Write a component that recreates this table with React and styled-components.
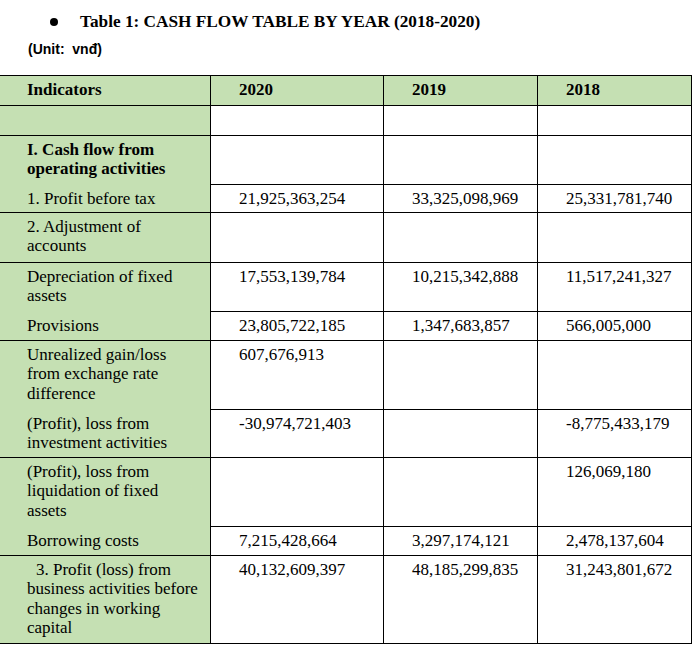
import styled, { createGlobalStyle } from 'styled-components';

const GlobalStyle = createGlobalStyle`
    html, body {
        margin: 0;
        padding: 0;
        background: #fff;
    }
    body {
        font-family: "Liberation Serif", "Times New Roman", serif;
        color: #000;
    }
`;

const Page = styled.div`
    width: 700px;
    padding-top: 12px;
`;

const TitleLine = styled.div`
    display: flex;
    align-items: center;
    height: 20px;
    padding-left: 50px;
    font-size: 17.25px;
    line-height: 20px;
    font-weight: bold;
`;

const Bullet = styled.span`
    width: 8px;
    height: 8px;
    margin-right: 22px;
    border-radius: 50%;
    background: #000;
`;

const Unit = styled.div`
    margin-top: 9px;
    padding-left: 28px;
    font-family: "Liberation Sans", Arial, sans-serif;
    font-size: 14px;
    line-height: 16px;
    font-weight: bold;
    white-space: pre;
`;

const Table = styled.div`
    width: 692px;
    margin-top: 18px;
    border-top: 1px solid #000;
`;

const Row = styled.div`
    display: grid;
    grid-template-columns: 211px 173px 154px 154px;
    height: ${(p) => p.$h}px;
`;

const Cell = styled.div`
    box-sizing: border-box;
    padding: 4px 8px 0 28px;
    border-right: 1px solid #000;
    border-bottom: ${(p) => (p.$open ? 'none' : '1px solid #000')};
    background: ${(p) => (p.$green ? '#c5e0b3' : '#fff')};
    font-size: 17px;
    line-height: 19.3px;
    font-weight: ${(p) => (p.$bold ? 'bold' : 'normal')};
    white-space: nowrap;
`;

const Label = styled(Cell)`
    padding-left: 27px;
    text-indent: ${(p) => (p.$indent ? '9px' : '0')};
`;

const rows = [
    { h: 30, lines: [''], vals: ['', '', ''] },
    { h: 49, lines: ['I. Cash flow from', 'operating activities'], bold: true, open: true, vals: ['', '', ''] },
    { h: 28, lines: ['1. Profit before tax'], vals: ['21,925,363,254', '33,325,098,969', '25,331,781,740'] },
    { h: 50, lines: ['2. Adjustment of', 'accounts'], vals: ['', '', ''] },
    { h: 49, lines: ['Depreciation of fixed', 'assets'], open: true, vals: ['17,553,139,784', '10,215,342,888', '11,517,241,327'] },
    { h: 29, lines: ['Provisions'], vals: ['23,805,722,185', '1,347,683,857', '566,005,000'] },
    { h: 69, lines: ['Unrealized gain/loss', 'from exchange rate', 'difference'], open: true, vals: ['607,676,913', '', ''] },
    { h: 48, lines: ['(Profit), loss from', 'investment activities'], vals: ['-30,974,721,403', '', '-8,775,433,179'] },
    { h: 69, lines: ['(Profit), loss from', 'liquidation of fixed', 'assets'], open: true, vals: ['', '', '126,069,180'] },
    { h: 29, lines: ['Borrowing costs'], vals: ['7,215,428,664', '3,297,174,121', '2,478,137,604'] },
    {
        h: 88,
        lines: ['3. Profit (loss) from', 'business activities before', 'changes in working', 'capital'],
        indent: true,
        vals: ['40,132,609,397', '48,185,299,835', '31,243,801,672'],
    },
];

const years = ['2020', '2019', '2018'];

function Lines({ lines }) {
    return lines.map((line, i) => (
        <span key={i}>
            {i > 0 && <br />}
            {line}
        </span>
    ));
}

export default function App() {
    return (
        <Page>
            <GlobalStyle />
            <TitleLine>
                <Bullet />
                Table 1: CASH FLOW TABLE BY YEAR (2018-2020)
            </TitleLine>
            <Unit>{'(Unit:  vnđ)'}</Unit>
            <Table>
                <Row $h={30}>
                    <Label $green $bold>Indicators</Label>
                    {years.map((y) => (
                        <Cell key={y} $green $bold>{y}</Cell>
                    ))}
                </Row>
                {rows.map((row, i) => (
                    <Row key={i} $h={row.h}>
                        <Label $green $bold={row.bold} $open={row.open} $indent={row.indent}>
                            <Lines lines={row.lines} />
                        </Label>
                        {row.vals.map((v, j) => (
                            <Cell key={j}>{v}</Cell>
                        ))}
                    </Row>
                ))}
            </Table>
        </Page>
    );
}
